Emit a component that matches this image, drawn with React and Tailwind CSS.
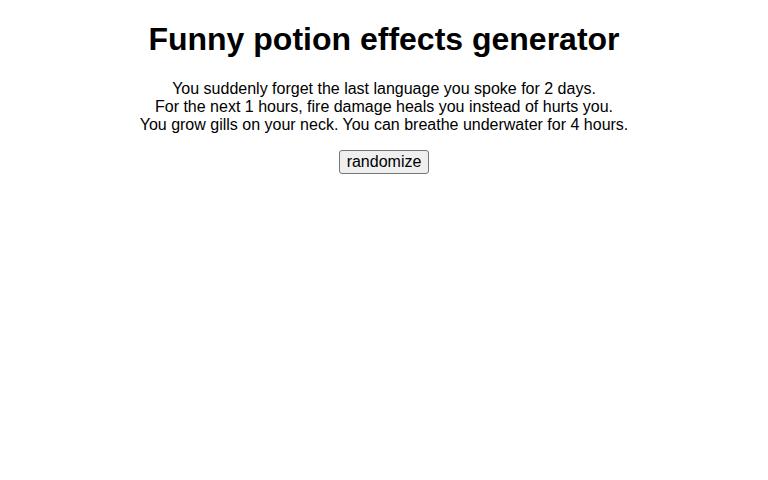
export default function App() {
  const effects = [
    "You suddenly forget the last language you spoke for 2 days.",
    "For the next 1 hours, fire damage heals you instead of hurts you.",
    "You grow gills on your neck. You can breathe underwater for 4 hours.",
  ];
  return (
    <div className="min-h-screen bg-white text-black text-center font-['Liberation_Sans',Arial,sans-serif] text-[16px] leading-[normal]">
      <h1 className="m-0 pt-[21.44px] pb-[21.44px] text-[32px] font-bold leading-[normal]">
        Funny potion effects generator
      </h1>
      <div className="mb-[16px]">
        {effects.map((e, i) => (
          <div key={i}>{e}</div>
        ))}
      </div>
      <button className="px-[7px] py-[2px] text-[16px] leading-[normal] border border-[#767676] rounded-[3px] bg-[#efefef] text-black">
        randomize
      </button>
    </div>
  );
}
